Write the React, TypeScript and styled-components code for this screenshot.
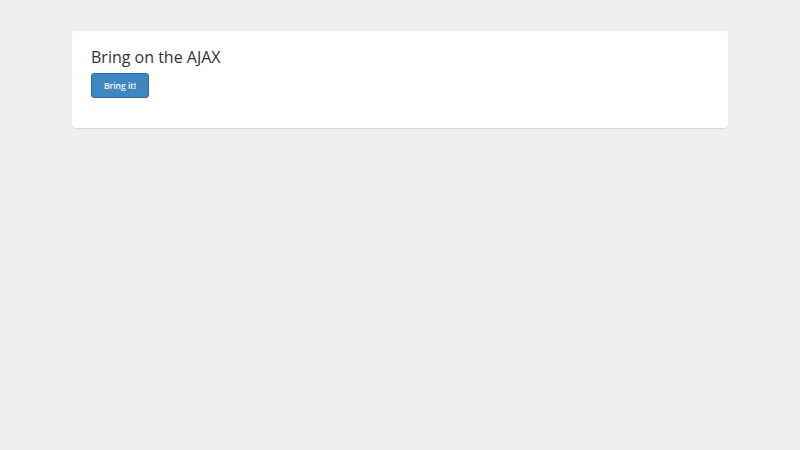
import React from 'react';
import styled, { createGlobalStyle } from 'styled-components';

const GlobalStyle = createGlobalStyle`
  html, body {
    margin: 0;
    padding: 0;
    background: #eeeff1;
    font-family: "Open Sans", "Noto Sans", sans-serif;
    color: #2f3337;
  }
`;

const Page = styled.div`
  padding: 31px 72px;
  min-height: 100vh;
  box-sizing: border-box;
`;

const Card = styled.div`
  background: #fff;
  border-radius: 4px;
  box-shadow: 0 1px 1px rgba(0, 0, 0, 0.1);
  padding: 14px 19px 30px;
  height: 97px;
  box-sizing: border-box;
`;

const Title = styled.h2`
  margin: 0 0 4px;
  font-size: 16px;
  font-weight: 400;
  line-height: 24px;
`;

const Button = styled.button`
  display: block;
  width: 58px;
  height: 25px;
  padding: 0;
  background: #3f87c3;
  border: 1px solid #2f6ea6;
  border-radius: 3px;
  color: #fff;
  font-family: "Open Sans", "Noto Sans", sans-serif;
  font-size: 8.5px;
  font-weight: 600;
  cursor: pointer;
`;

const App = () => (
  <>
    <GlobalStyle />
    <Page>
      <Card>
        <Title>Bring on the AJAX</Title>
        <Button>Bring it!</Button>
      </Card>
    </Page>
  </>
);

export default App;
